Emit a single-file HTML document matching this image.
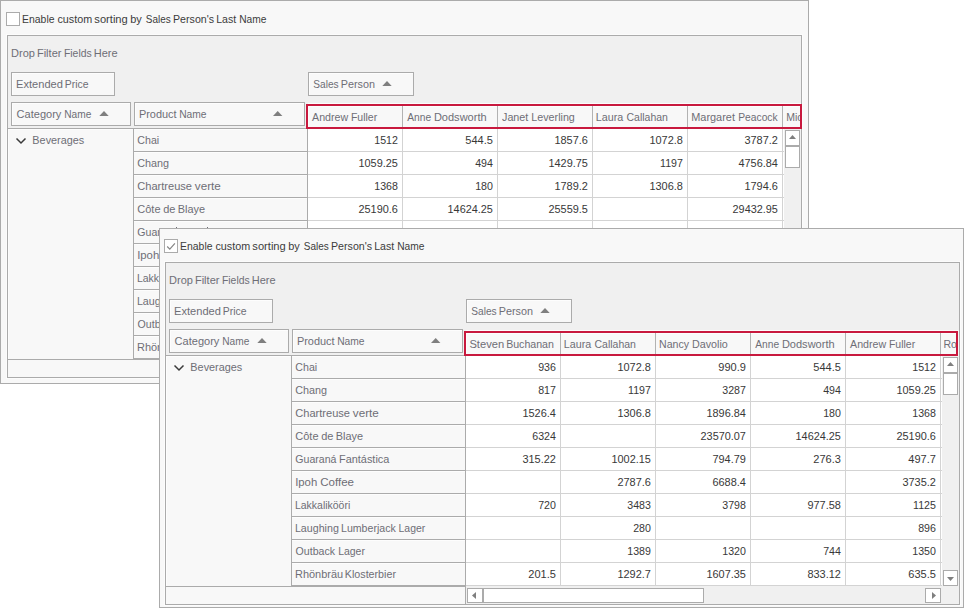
<!DOCTYPE html>
<html><head><meta charset="utf-8"><title>Pivot custom sorting</title>
<style>
html,body{margin:0;padding:0;background:#fff;}
body{width:964px;height:608px;position:relative;overflow:hidden;font-family:"Liberation Sans",sans-serif;font-size:11px;line-height:12px;}
div,svg{position:absolute;box-sizing:content-box;}
.t{white-space:nowrap;height:12px;}
</style></head><body>
<div style="left:0px;top:0px;width:807px;height:382px;border:1px solid #ababab;background:#f8f8f8;overflow:hidden">
<div style="left:-1px;top:-1px;width:0;height:0">
<div style="left:6px;top:12px;width:12px;height:12px;border:1px solid #ababab;background:#fff"></div>
<div class="t" style="left:22px;top:13px;color:#3c3c3c;transform:translateX(0.09px) scaleX(0.9459);transform-origin:0 0;">Enable</div>
<div class="t" style="left:57px;top:13px;color:#3c3c3c;transform:translateX(0.43px) scaleX(0.9789);transform-origin:0 0;">custom</div>
<div class="t" style="left:94px;top:13px;color:#3c3c3c;transform:translateX(0.34px) scaleX(1.0113);transform-origin:0 0;">sorting</div>
<div class="t" style="left:130px;top:13px;color:#3c3c3c;transform:translateX(0.26px) scaleX(0.9991);transform-origin:0 0;">by</div>
<div class="t" style="left:145px;top:13px;color:#3c3c3c;transform:translateX(0.75px) scaleX(0.906);transform-origin:0 0;">Sales</div>
<div class="t" style="left:173px;top:13px;color:#3c3c3c;transform:translateX(0.03px) scaleX(0.9659);transform-origin:0 0;">Person's</div>
<div class="t" style="left:216px;top:13px;color:#3c3c3c;transform:translateX(0.14px) scaleX(0.9596);transform-origin:0 0;">Last</div>
<div class="t" style="left:239px;top:13px;color:#3c3c3c;transform:translateX(0.16px) scaleX(0.9286);transform-origin:0 0;">Name</div>
<div style="left:7px;top:35px;width:793px;height:341px;border:1px solid #ababab;background:#f0f0f0;box-shadow:0 0 0 1px #fcfcfc"></div>
<div class="t" style="left:11px;top:47px;color:#6e6e76;transform:translateX(0.05px) scaleX(1.0);transform-origin:0 0;">Drop</div>
<div class="t" style="left:36px;top:47px;color:#6e6e76;transform:translateX(0.9px) scaleX(1.0043);transform-origin:0 0;">Filter</div>
<div class="t" style="left:63px;top:47px;color:#6e6e76;transform:translateX(0.95px) scaleX(0.9464);transform-origin:0 0;">Fields</div>
<div class="t" style="left:93px;top:47px;color:#6e6e76;transform:translateX(0.8px) scaleX(1.0);transform-origin:0 0;">Here</div>
<div style="left:11px;top:72px;width:102px;height:22px;border:1px solid #ababab;background:#f8f8f8;box-shadow:inset 1px 1px 0 #fdfdfd"></div>
<div class="t" style="left:16px;top:78px;color:#6e6e76;transform:translateX(0.04px) scaleX(1.0078);transform-origin:0 0;">Extended</div>
<div class="t" style="left:64px;top:78px;color:#6e6e76;transform:translateX(0.85px) scaleX(0.9494);transform-origin:0 0;">Price</div>
<div style="left:308px;top:72px;width:104px;height:22px;border:1px solid #ababab;background:#f8f8f8;box-shadow:inset 1px 1px 0 #fdfdfd"></div>
<div class="t" style="left:313px;top:78px;color:#6e6e76;transform:translateX(0.34px) scaleX(0.9211);transform-origin:0 0;">Sales</div>
<div class="t" style="left:340px;top:78px;color:#6e6e76;transform:translateX(0.72px) scaleX(0.9819);transform-origin:0 0;">Person</div>
<svg style="left:381px;top:80px" width="12" height="8" viewBox="0 0 12 8"><polygon points="1.3,6.1 10.7,6.1 6.0,1.1" fill="#7f7f7f"/></svg>
<div style="left:11px;top:102px;width:118px;height:22px;border:1px solid #ababab;background:#f8f8f8;box-shadow:inset 1px 1px 0 #fdfdfd"></div>
<div class="t" style="left:16px;top:108px;color:#6e6e76;transform:translateX(0.6px) scaleX(1.0023);transform-origin:0 0;">Category</div>
<div class="t" style="left:64px;top:108px;color:#6e6e76;transform:translateX(0.27px) scaleX(0.9232);transform-origin:0 0;">Name</div>
<svg style="left:98px;top:110px" width="12" height="8" viewBox="0 0 12 8"><polygon points="1.3,6.1 10.7,6.1 6,1.1" fill="#7f7f7f"/></svg>
<div style="left:134px;top:102px;width:169px;height:22px;border:1px solid #ababab;background:#f8f8f8;box-shadow:inset 1px 1px 0 #fdfdfd"></div>
<div class="t" style="left:138px;top:108px;color:#6e6e76;transform:translateX(0.9px) scaleX(0.9946);transform-origin:0 0;">Product</div>
<div class="t" style="left:179px;top:108px;color:#6e6e76;transform:translateX(0.16px) scaleX(0.9339);transform-origin:0 0;">Name</div>
<svg style="left:272px;top:110px" width="12" height="8" viewBox="0 0 12 8"><polygon points="1.0,6.1 10.4,6.1 5.7,1.1" fill="#7f7f7f"/></svg>
<div style="left:308px;top:103px;width:493px;height:26px;background:#f8f8f8;box-shadow:inset 0 1px 0 #fcfcfc;"></div>
<div style="left:308px;top:106px;width:492px;height:1px;background:#fdfdfd;"></div>
<div style="left:308px;top:106px;width:1px;height:21px;background:#fdfdfd;"></div>
<div class="t" style="left:312px;top:111px;color:#6e6e76;transform:translateX(0.1px) scaleX(0.9678);transform-origin:0 0;">Andrew</div>
<div class="t" style="left:350px;top:111px;color:#6e6e76;transform:translateX(0.94px) scaleX(0.9545);transform-origin:0 0;">Fuller</div>
<div style="left:402px;top:104px;width:1px;height:25px;background:#b2b2b2;"></div>
<div class="t" style="left:407px;top:111px;color:#6e6e76;transform:translateX(0.3px) scaleX(0.9286);transform-origin:0 0;">Anne</div>
<div class="t" style="left:433px;top:111px;color:#6e6e76;transform:translateX(0.9px) scaleX(1.002);transform-origin:0 0;">Dodsworth</div>
<div style="left:497px;top:104px;width:1px;height:25px;background:#b2b2b2;"></div>
<div class="t" style="left:502px;top:111px;color:#6e6e76;transform:translateX(0.0px) scaleX(0.9774);transform-origin:0 0;">Janet</div>
<div class="t" style="left:531px;top:111px;color:#6e6e76;transform:translateX(0.32px) scaleX(0.9744);transform-origin:0 0;">Leverling</div>
<div style="left:592px;top:104px;width:1px;height:25px;background:#b2b2b2;"></div>
<div class="t" style="left:595px;top:111px;color:#6e6e76;transform:translateX(0.82px) scaleX(0.9743);transform-origin:0 0;">Laura</div>
<div class="t" style="left:626px;top:111px;color:#6e6e76;transform:translateX(0.53px) scaleX(0.9525);transform-origin:0 0;">Callahan</div>
<div style="left:687px;top:104px;width:1px;height:25px;background:#b2b2b2;"></div>
<div class="t" style="left:691px;top:111px;color:#6e6e76;transform:translateX(0.21px) scaleX(0.993);transform-origin:0 0;">Margaret</div>
<div class="t" style="left:738px;top:111px;color:#6e6e76;transform:translateX(0.26px) scaleX(0.9322);transform-origin:0 0;">Peacock</div>
<div style="left:782px;top:104px;width:1px;height:25px;background:#b2b2b2;"></div>
<div style="left:783px;top:0;width:17px;height:380px;overflow:hidden"><div style="left:-783px;top:0;width:0;height:0">
<div class="t" style="left:786px;top:111px;color:#6e6e76;transform:translateX(0.24px) scaleX(0.955);transform-origin:0 0;">Michael</div>
</div></div>
<div style="left:8px;top:128px;width:300px;height:1px;background:#ababab;"></div>
<div style="left:8px;top:129px;width:125px;height:230px;background:#f8f8f8;box-shadow:inset 1px 1px 0 #fdfdfd;"></div>
<div style="left:8px;top:359px;width:300px;height:1px;background:#ababab;"></div>
<div style="left:133px;top:128px;width:1px;height:232px;background:#ababab;"></div>
<div style="left:134px;top:129px;width:173px;height:230px;background:#f8f8f8;"></div>
<div style="left:307px;top:129px;width:1px;height:248px;background:#ababab;"></div>
<div style="left:8px;top:360px;width:299px;height:17px;background:#f8f8f8;"></div>
<svg style="left:15px;top:137px" width="12" height="8" viewBox="0 0 12 8"><path d="M1.5 1.5 L6 6 L10.5 1.5" fill="none" stroke="#3a3a3a" stroke-width="1.5"/></svg>
<div class="t" style="left:32px;top:134px;color:#6e6e76;transform:translateX(0.37px) scaleX(0.9852);transform-origin:0 0;">Beverages</div>
<div style="left:308px;top:129px;width:476px;height:230px;background:#fff;"></div>
<div class="t" style="left:137px;top:134px;color:#6e6e76;transform:translateX(0.32px) scaleX(0.9671);transform-origin:0 0;">Chai</div>
<div style="left:134px;top:151px;width:173px;height:1px;background:#ababab;"></div>
<div style="left:134px;top:129px;width:173px;height:1px;background:#fdfdfd;"></div>
<div style="left:308px;top:151px;width:476px;height:1px;background:#d3d3d3;"></div>
<div class="t" style="left:277px;width:120px;text-align:right;top:134px;color:#383838;transform:translateX(0.9px) scaleX(0.9662);transform-origin:100% 0;">1512</div>
<div class="t" style="left:372px;width:120px;text-align:right;top:134px;color:#383838;transform:translateX(0.9px) scaleX(1.002);transform-origin:100% 0;">544.5</div>
<div class="t" style="left:467px;width:120px;text-align:right;top:134px;color:#383838;transform:translateX(0.9px) scaleX(0.9955);transform-origin:100% 0;">1857.6</div>
<div class="t" style="left:562px;width:120px;text-align:right;top:134px;color:#383838;transform:translateX(0.9px) scaleX(0.9955);transform-origin:100% 0;">1072.8</div>
<div class="t" style="left:657px;width:120px;text-align:right;top:134px;color:#383838;transform:translateX(0.9px) scaleX(0.9955);transform-origin:100% 0;">3787.2</div>
<div class="t" style="left:137px;top:157px;color:#6e6e76;transform:translateX(0.31px) scaleX(0.9807);transform-origin:0 0;">Chang</div>
<div style="left:134px;top:174px;width:173px;height:1px;background:#ababab;"></div>
<div style="left:134px;top:152px;width:173px;height:1px;background:#fdfdfd;"></div>
<div style="left:308px;top:174px;width:476px;height:1px;background:#d3d3d3;"></div>
<div class="t" style="left:277px;width:120px;text-align:right;top:157px;color:#383838;transform:translateX(0.9px) scaleX(0.991);transform-origin:100% 0;">1059.25</div>
<div class="t" style="left:372px;width:120px;text-align:right;top:157px;color:#383838;transform:translateX(0.9px) scaleX(0.9662);transform-origin:100% 0;">494</div>
<div class="t" style="left:467px;width:120px;text-align:right;top:157px;color:#383838;transform:translateX(0.9px) scaleX(0.991);transform-origin:100% 0;">1429.75</div>
<div class="t" style="left:562px;width:120px;text-align:right;top:157px;color:#383838;transform:translateX(0.9px) scaleX(0.9662);transform-origin:100% 0;">1197</div>
<div class="t" style="left:657px;width:120px;text-align:right;top:157px;color:#383838;transform:translateX(0.9px) scaleX(0.991);transform-origin:100% 0;">4756.84</div>
<div class="t" style="left:137px;top:180px;color:#6e6e76;transform:translateX(0.3px) scaleX(1.0056);transform-origin:0 0;">Chartreuse</div>
<div class="t" style="left:194px;top:180px;color:#6e6e76;transform:translateX(0.84px) scaleX(1.0607);transform-origin:0 0;">verte</div>
<div style="left:134px;top:197px;width:173px;height:1px;background:#ababab;"></div>
<div style="left:134px;top:175px;width:173px;height:1px;background:#fdfdfd;"></div>
<div style="left:308px;top:197px;width:476px;height:1px;background:#d3d3d3;"></div>
<div class="t" style="left:277px;width:120px;text-align:right;top:180px;color:#383838;transform:translateX(0.9px) scaleX(0.9662);transform-origin:100% 0;">1368</div>
<div class="t" style="left:372px;width:120px;text-align:right;top:180px;color:#383838;transform:translateX(0.9px) scaleX(0.9662);transform-origin:100% 0;">180</div>
<div class="t" style="left:467px;width:120px;text-align:right;top:180px;color:#383838;transform:translateX(0.9px) scaleX(0.9955);transform-origin:100% 0;">1789.2</div>
<div class="t" style="left:562px;width:120px;text-align:right;top:180px;color:#383838;transform:translateX(0.9px) scaleX(0.9955);transform-origin:100% 0;">1306.8</div>
<div class="t" style="left:657px;width:120px;text-align:right;top:180px;color:#383838;transform:translateX(0.9px) scaleX(0.9955);transform-origin:100% 0;">1794.6</div>
<div class="t" style="left:137px;top:203px;color:#6e6e76;transform:translateX(0.3px) scaleX(1.0);transform-origin:0 0;">Côte</div>
<div class="t" style="left:163px;top:203px;color:#6e6e76;transform:translateX(0.2px) scaleX(1.0);transform-origin:0 0;">de</div>
<div class="t" style="left:177px;top:203px;color:#6e6e76;transform:translateX(0.71px) scaleX(0.9923);transform-origin:0 0;">Blaye</div>
<div style="left:134px;top:220px;width:173px;height:1px;background:#ababab;"></div>
<div style="left:134px;top:198px;width:173px;height:1px;background:#fdfdfd;"></div>
<div style="left:308px;top:220px;width:476px;height:1px;background:#d3d3d3;"></div>
<div class="t" style="left:277px;width:120px;text-align:right;top:203px;color:#383838;transform:translateX(0.9px) scaleX(0.991);transform-origin:100% 0;">25190.6</div>
<div class="t" style="left:372px;width:120px;text-align:right;top:203px;color:#383838;transform:translateX(0.9px) scaleX(0.9877);transform-origin:100% 0;">14624.25</div>
<div class="t" style="left:467px;width:120px;text-align:right;top:203px;color:#383838;transform:translateX(0.9px) scaleX(0.991);transform-origin:100% 0;">25559.5</div>
<div class="t" style="left:657px;width:120px;text-align:right;top:203px;color:#383838;transform:translateX(0.9px) scaleX(0.9877);transform-origin:100% 0;">29432.95</div>
<div class="t" style="left:137px;top:226px;color:#6e6e76;transform:translateX(0.32px) scaleX(0.9597);transform-origin:0 0;">Guaraná</div>
<div class="t" style="left:181px;top:226px;color:#6e6e76;transform:translateX(0.01px) scaleX(0.992);transform-origin:0 0;">Fantástica</div>
<div style="left:134px;top:243px;width:173px;height:1px;background:#ababab;"></div>
<div style="left:134px;top:221px;width:173px;height:1px;background:#fdfdfd;"></div>
<div style="left:308px;top:243px;width:476px;height:1px;background:#d3d3d3;"></div>
<div class="t" style="left:277px;width:120px;text-align:right;top:226px;color:#383838;transform:translateX(0.9px) scaleX(1.002);transform-origin:100% 0;">497.7</div>
<div class="t" style="left:372px;width:120px;text-align:right;top:226px;color:#383838;transform:translateX(0.9px) scaleX(1.002);transform-origin:100% 0;">276.3</div>
<div class="t" style="left:562px;width:120px;text-align:right;top:226px;color:#383838;transform:translateX(0.9px) scaleX(0.991);transform-origin:100% 0;">1002.15</div>
<div class="t" style="left:137px;top:249px;color:#6e6e76;transform:translateX(0.17px) scaleX(1.0305);transform-origin:0 0;">Ipoh</div>
<div class="t" style="left:162px;top:249px;color:#6e6e76;transform:translateX(0.17px) scaleX(1.0498);transform-origin:0 0;">Coffee</div>
<div style="left:134px;top:266px;width:173px;height:1px;background:#ababab;"></div>
<div style="left:134px;top:244px;width:173px;height:1px;background:#fdfdfd;"></div>
<div style="left:308px;top:266px;width:476px;height:1px;background:#d3d3d3;"></div>
<div class="t" style="left:136px;top:272px;color:#6e6e76;transform:translateX(0.94px) scaleX(0.9522);transform-origin:0 0;">Lakkalikööri</div>
<div style="left:134px;top:289px;width:173px;height:1px;background:#ababab;"></div>
<div style="left:134px;top:267px;width:173px;height:1px;background:#fdfdfd;"></div>
<div style="left:308px;top:289px;width:476px;height:1px;background:#d3d3d3;"></div>
<div class="t" style="left:136px;top:295px;color:#6e6e76;transform:translateX(0.93px) scaleX(0.9703);transform-origin:0 0;">Laughing</div>
<div class="t" style="left:183px;top:295px;color:#6e6e76;transform:translateX(0.03px) scaleX(0.9624);transform-origin:0 0;">Lumberjack</div>
<div class="t" style="left:240px;top:295px;color:#6e6e76;transform:translateX(0.55px) scaleX(0.9483);transform-origin:0 0;">Lager</div>
<div style="left:134px;top:312px;width:173px;height:1px;background:#ababab;"></div>
<div style="left:134px;top:290px;width:173px;height:1px;background:#fdfdfd;"></div>
<div style="left:308px;top:312px;width:476px;height:1px;background:#d3d3d3;"></div>
<div class="t" style="left:137px;top:318px;color:#6e6e76;transform:translateX(0.62px) scaleX(0.9605);transform-origin:0 0;">Outback</div>
<div class="t" style="left:180px;top:318px;color:#6e6e76;transform:translateX(0.14px) scaleX(0.952);transform-origin:0 0;">Lager</div>
<div style="left:134px;top:335px;width:173px;height:1px;background:#ababab;"></div>
<div style="left:134px;top:313px;width:173px;height:1px;background:#fdfdfd;"></div>
<div style="left:308px;top:335px;width:476px;height:1px;background:#d3d3d3;"></div>
<div class="t" style="left:137px;top:341px;color:#6e6e76;transform:translateX(0.0px) scaleX(0.9957);transform-origin:0 0;">Rhönbräu</div>
<div class="t" style="left:186px;top:341px;color:#6e6e76;transform:translateX(0.82px) scaleX(0.9728);transform-origin:0 0;">Klosterbier</div>
<div style="left:134px;top:358px;width:173px;height:1px;background:#ababab;"></div>
<div style="left:134px;top:336px;width:173px;height:1px;background:#fdfdfd;"></div>
<div style="left:308px;top:358px;width:476px;height:1px;background:#d3d3d3;"></div>
<div style="left:402px;top:129px;width:1px;height:230px;background:#d3d3d3;"></div>
<div style="left:497px;top:129px;width:1px;height:230px;background:#d3d3d3;"></div>
<div style="left:592px;top:129px;width:1px;height:230px;background:#d3d3d3;"></div>
<div style="left:687px;top:129px;width:1px;height:230px;background:#d3d3d3;"></div>
<div style="left:782px;top:129px;width:1px;height:230px;background:#d3d3d3;"></div>
<div style="left:176px;top:227px;width:1px;height:1px;background:#6e6e76;"></div>
<div style="left:207px;top:227px;width:1px;height:1px;background:#6e6e76;"></div>
<div style="left:784px;top:129px;width:17px;height:231px;background:#f0f0f0;"></div>
<div style="left:785px;top:130px;width:13px;height:14px;border:1px solid #ababab;background:#fff"></div>
<svg style="left:788px;top:134px" width="9" height="6" viewBox="0 0 9 6"><polygon points="1.0,5 8.0,5 4.5,1" fill="#7f7f7f"/></svg>
<div style="left:785px;top:146px;width:13px;height:20px;border:1px solid #ababab;background:#fff"></div>
<div style="left:785px;top:343px;width:13px;height:14px;border:1px solid #ababab;background:#fff"></div>
<svg style="left:788px;top:349px" width="9" height="6" viewBox="0 0 9 6"><polygon points="1.0,1 8.0,1 4.5,5" fill="#7f7f7f"/></svg>
<div style="left:308px;top:360px;width:493px;height:17px;background:#f0f0f0;"></div>
<div style="left:309px;top:361px;width:14px;height:13px;border:1px solid #ababab;background:#fff"></div>
<svg style="left:313px;top:364px" width="6" height="9" viewBox="0 0 6 9"><polygon points="5,1.0 5,8.0 1,4.5" fill="#7f7f7f"/></svg>
<div style="left:325px;top:361px;width:219px;height:13px;border:1px solid #ababab;background:#fff"></div>
<div style="left:767px;top:361px;width:14px;height:13px;border:1px solid #ababab;background:#fff"></div>
<svg style="left:773px;top:364px" width="6" height="9" viewBox="0 0 6 9"><polygon points="1,1.0 1,8.0 5,4.5" fill="#7f7f7f"/></svg>
<div style="left:306px;top:104px;width:492px;height:21px;border:2px solid #c8193e"></div>
</div></div>
<div style="left:159px;top:228px;width:803px;height:378px;border:1px solid #ababab;background:#f8f8f8;overflow:hidden">
<div style="left:-2px;top:-2px;width:0;height:0">
<div style="left:6px;top:12px;width:12px;height:12px;border:1px solid #ababab;background:#fff"></div>
<svg style="left:6px;top:12px" width="14" height="14" viewBox="0 0 14 14"><path d="M3.2 7.5 L5.8 10.1 L10.9 4.3" fill="none" stroke="#858585" stroke-width="1.2"/></svg>
<div class="t" style="left:22px;top:13px;color:#3c3c3c;transform:translateX(0.09px) scaleX(0.9459);transform-origin:0 0;">Enable</div>
<div class="t" style="left:57px;top:13px;color:#3c3c3c;transform:translateX(0.43px) scaleX(0.9789);transform-origin:0 0;">custom</div>
<div class="t" style="left:94px;top:13px;color:#3c3c3c;transform:translateX(0.34px) scaleX(1.0113);transform-origin:0 0;">sorting</div>
<div class="t" style="left:130px;top:13px;color:#3c3c3c;transform:translateX(0.26px) scaleX(0.9991);transform-origin:0 0;">by</div>
<div class="t" style="left:145px;top:13px;color:#3c3c3c;transform:translateX(0.75px) scaleX(0.906);transform-origin:0 0;">Sales</div>
<div class="t" style="left:173px;top:13px;color:#3c3c3c;transform:translateX(0.03px) scaleX(0.9659);transform-origin:0 0;">Person's</div>
<div class="t" style="left:216px;top:13px;color:#3c3c3c;transform:translateX(0.14px) scaleX(0.9596);transform-origin:0 0;">Last</div>
<div class="t" style="left:239px;top:13px;color:#3c3c3c;transform:translateX(0.16px) scaleX(0.9286);transform-origin:0 0;">Name</div>
<div style="left:7px;top:35px;width:793px;height:341px;border:1px solid #ababab;background:#f0f0f0;box-shadow:0 0 0 1px #fcfcfc"></div>
<div class="t" style="left:11px;top:47px;color:#6e6e76;transform:translateX(0.05px) scaleX(1.0);transform-origin:0 0;">Drop</div>
<div class="t" style="left:36px;top:47px;color:#6e6e76;transform:translateX(0.9px) scaleX(1.0043);transform-origin:0 0;">Filter</div>
<div class="t" style="left:63px;top:47px;color:#6e6e76;transform:translateX(0.95px) scaleX(0.9464);transform-origin:0 0;">Fields</div>
<div class="t" style="left:93px;top:47px;color:#6e6e76;transform:translateX(0.8px) scaleX(1.0);transform-origin:0 0;">Here</div>
<div style="left:11px;top:72px;width:102px;height:22px;border:1px solid #ababab;background:#f8f8f8;box-shadow:inset 1px 1px 0 #fdfdfd"></div>
<div class="t" style="left:16px;top:78px;color:#6e6e76;transform:translateX(0.04px) scaleX(1.0078);transform-origin:0 0;">Extended</div>
<div class="t" style="left:64px;top:78px;color:#6e6e76;transform:translateX(0.85px) scaleX(0.9494);transform-origin:0 0;">Price</div>
<div style="left:308px;top:72px;width:104px;height:22px;border:1px solid #ababab;background:#f8f8f8;box-shadow:inset 1px 1px 0 #fdfdfd"></div>
<div class="t" style="left:313px;top:78px;color:#6e6e76;transform:translateX(0.34px) scaleX(0.9211);transform-origin:0 0;">Sales</div>
<div class="t" style="left:340px;top:78px;color:#6e6e76;transform:translateX(0.72px) scaleX(0.9819);transform-origin:0 0;">Person</div>
<svg style="left:381px;top:80px" width="12" height="8" viewBox="0 0 12 8"><polygon points="1.3,6.1 10.7,6.1 6.0,1.1" fill="#7f7f7f"/></svg>
<div style="left:11px;top:102px;width:118px;height:22px;border:1px solid #ababab;background:#f8f8f8;box-shadow:inset 1px 1px 0 #fdfdfd"></div>
<div class="t" style="left:16px;top:108px;color:#6e6e76;transform:translateX(0.6px) scaleX(1.0023);transform-origin:0 0;">Category</div>
<div class="t" style="left:64px;top:108px;color:#6e6e76;transform:translateX(0.27px) scaleX(0.9232);transform-origin:0 0;">Name</div>
<svg style="left:98px;top:110px" width="12" height="8" viewBox="0 0 12 8"><polygon points="1.3,6.1 10.7,6.1 6,1.1" fill="#7f7f7f"/></svg>
<div style="left:134px;top:102px;width:169px;height:22px;border:1px solid #ababab;background:#f8f8f8;box-shadow:inset 1px 1px 0 #fdfdfd"></div>
<div class="t" style="left:138px;top:108px;color:#6e6e76;transform:translateX(0.9px) scaleX(0.9946);transform-origin:0 0;">Product</div>
<div class="t" style="left:179px;top:108px;color:#6e6e76;transform:translateX(0.16px) scaleX(0.9339);transform-origin:0 0;">Name</div>
<svg style="left:272px;top:110px" width="12" height="8" viewBox="0 0 12 8"><polygon points="1.0,6.1 10.4,6.1 5.7,1.1" fill="#7f7f7f"/></svg>
<div style="left:308px;top:103px;width:493px;height:26px;background:#f8f8f8;box-shadow:inset 0 1px 0 #fcfcfc;"></div>
<div style="left:308px;top:106px;width:490px;height:1px;background:#fdfdfd;"></div>
<div style="left:308px;top:106px;width:1px;height:21px;background:#fdfdfd;"></div>
<div class="t" style="left:311px;top:111px;color:#6e6e76;transform:translateX(0.39px) scaleX(1.0152);transform-origin:0 0;">Steven</div>
<div class="t" style="left:348px;top:111px;color:#6e6e76;transform:translateX(0.13px) scaleX(0.9645);transform-origin:0 0;">Buchanan</div>
<div style="left:402px;top:104px;width:1px;height:25px;background:#b2b2b2;"></div>
<div class="t" style="left:405px;top:111px;color:#6e6e76;transform:translateX(0.82px) scaleX(0.9743);transform-origin:0 0;">Laura</div>
<div class="t" style="left:436px;top:111px;color:#6e6e76;transform:translateX(0.53px) scaleX(0.9525);transform-origin:0 0;">Callahan</div>
<div style="left:497px;top:104px;width:1px;height:25px;background:#b2b2b2;"></div>
<div class="t" style="left:501px;top:111px;color:#6e6e76;transform:translateX(0.03px) scaleX(0.9619);transform-origin:0 0;">Nancy</div>
<div class="t" style="left:533px;top:111px;color:#6e6e76;transform:translateX(0.92px) scaleX(0.9773);transform-origin:0 0;">Davolio</div>
<div style="left:592px;top:104px;width:1px;height:25px;background:#b2b2b2;"></div>
<div class="t" style="left:597px;top:111px;color:#6e6e76;transform:translateX(0.3px) scaleX(0.9286);transform-origin:0 0;">Anne</div>
<div class="t" style="left:623px;top:111px;color:#6e6e76;transform:translateX(0.9px) scaleX(1.002);transform-origin:0 0;">Dodsworth</div>
<div style="left:687px;top:104px;width:1px;height:25px;background:#b2b2b2;"></div>
<div class="t" style="left:692px;top:111px;color:#6e6e76;transform:translateX(0.1px) scaleX(0.9678);transform-origin:0 0;">Andrew</div>
<div class="t" style="left:730px;top:111px;color:#6e6e76;transform:translateX(0.94px) scaleX(0.9545);transform-origin:0 0;">Fuller</div>
<div style="left:782px;top:104px;width:1px;height:25px;background:#b2b2b2;"></div>
<div style="left:783px;top:0;width:15px;height:380px;overflow:hidden"><div style="left:-783px;top:0;width:0;height:0">
<div class="t" style="left:785px;top:111px;color:#6e6e76;transform:translateX(0.44px) scaleX(0.955);transform-origin:0 0;">Robert</div>
</div></div>
<div style="left:8px;top:128px;width:300px;height:1px;background:#ababab;"></div>
<div style="left:8px;top:129px;width:125px;height:230px;background:#f8f8f8;box-shadow:inset 1px 1px 0 #fdfdfd;"></div>
<div style="left:8px;top:359px;width:300px;height:1px;background:#ababab;"></div>
<div style="left:133px;top:128px;width:1px;height:232px;background:#ababab;"></div>
<div style="left:134px;top:129px;width:173px;height:230px;background:#f8f8f8;"></div>
<div style="left:307px;top:129px;width:1px;height:248px;background:#ababab;"></div>
<div style="left:8px;top:360px;width:299px;height:17px;background:#f8f8f8;"></div>
<svg style="left:15px;top:137px" width="12" height="8" viewBox="0 0 12 8"><path d="M1.5 1.5 L6 6 L10.5 1.5" fill="none" stroke="#3a3a3a" stroke-width="1.5"/></svg>
<div class="t" style="left:32px;top:134px;color:#6e6e76;transform:translateX(0.37px) scaleX(0.9852);transform-origin:0 0;">Beverages</div>
<div style="left:308px;top:129px;width:476px;height:230px;background:#fff;"></div>
<div class="t" style="left:137px;top:134px;color:#6e6e76;transform:translateX(0.32px) scaleX(0.9671);transform-origin:0 0;">Chai</div>
<div style="left:134px;top:151px;width:173px;height:1px;background:#ababab;"></div>
<div style="left:134px;top:129px;width:173px;height:1px;background:#fdfdfd;"></div>
<div style="left:308px;top:151px;width:476px;height:1px;background:#d3d3d3;"></div>
<div class="t" style="left:277px;width:120px;text-align:right;top:134px;color:#383838;transform:translateX(0.9px) scaleX(0.9662);transform-origin:100% 0;">936</div>
<div class="t" style="left:372px;width:120px;text-align:right;top:134px;color:#383838;transform:translateX(0.9px) scaleX(0.9955);transform-origin:100% 0;">1072.8</div>
<div class="t" style="left:467px;width:120px;text-align:right;top:134px;color:#383838;transform:translateX(0.9px) scaleX(1.002);transform-origin:100% 0;">990.9</div>
<div class="t" style="left:562px;width:120px;text-align:right;top:134px;color:#383838;transform:translateX(0.9px) scaleX(1.002);transform-origin:100% 0;">544.5</div>
<div class="t" style="left:657px;width:120px;text-align:right;top:134px;color:#383838;transform:translateX(0.9px) scaleX(0.9662);transform-origin:100% 0;">1512</div>
<div class="t" style="left:137px;top:157px;color:#6e6e76;transform:translateX(0.31px) scaleX(0.9807);transform-origin:0 0;">Chang</div>
<div style="left:134px;top:174px;width:173px;height:1px;background:#ababab;"></div>
<div style="left:134px;top:152px;width:173px;height:1px;background:#fdfdfd;"></div>
<div style="left:308px;top:174px;width:476px;height:1px;background:#d3d3d3;"></div>
<div class="t" style="left:277px;width:120px;text-align:right;top:157px;color:#383838;transform:translateX(0.9px) scaleX(0.9662);transform-origin:100% 0;">817</div>
<div class="t" style="left:372px;width:120px;text-align:right;top:157px;color:#383838;transform:translateX(0.9px) scaleX(0.9662);transform-origin:100% 0;">1197</div>
<div class="t" style="left:467px;width:120px;text-align:right;top:157px;color:#383838;transform:translateX(0.9px) scaleX(0.9662);transform-origin:100% 0;">3287</div>
<div class="t" style="left:562px;width:120px;text-align:right;top:157px;color:#383838;transform:translateX(0.9px) scaleX(0.9662);transform-origin:100% 0;">494</div>
<div class="t" style="left:657px;width:120px;text-align:right;top:157px;color:#383838;transform:translateX(0.9px) scaleX(0.991);transform-origin:100% 0;">1059.25</div>
<div class="t" style="left:137px;top:180px;color:#6e6e76;transform:translateX(0.3px) scaleX(1.0056);transform-origin:0 0;">Chartreuse</div>
<div class="t" style="left:194px;top:180px;color:#6e6e76;transform:translateX(0.84px) scaleX(1.0607);transform-origin:0 0;">verte</div>
<div style="left:134px;top:197px;width:173px;height:1px;background:#ababab;"></div>
<div style="left:134px;top:175px;width:173px;height:1px;background:#fdfdfd;"></div>
<div style="left:308px;top:197px;width:476px;height:1px;background:#d3d3d3;"></div>
<div class="t" style="left:277px;width:120px;text-align:right;top:180px;color:#383838;transform:translateX(0.9px) scaleX(0.9955);transform-origin:100% 0;">1526.4</div>
<div class="t" style="left:372px;width:120px;text-align:right;top:180px;color:#383838;transform:translateX(0.9px) scaleX(0.9955);transform-origin:100% 0;">1306.8</div>
<div class="t" style="left:467px;width:120px;text-align:right;top:180px;color:#383838;transform:translateX(0.9px) scaleX(0.991);transform-origin:100% 0;">1896.84</div>
<div class="t" style="left:562px;width:120px;text-align:right;top:180px;color:#383838;transform:translateX(0.9px) scaleX(0.9662);transform-origin:100% 0;">180</div>
<div class="t" style="left:657px;width:120px;text-align:right;top:180px;color:#383838;transform:translateX(0.9px) scaleX(0.9662);transform-origin:100% 0;">1368</div>
<div class="t" style="left:137px;top:203px;color:#6e6e76;transform:translateX(0.3px) scaleX(1.0);transform-origin:0 0;">Côte</div>
<div class="t" style="left:163px;top:203px;color:#6e6e76;transform:translateX(0.2px) scaleX(1.0);transform-origin:0 0;">de</div>
<div class="t" style="left:177px;top:203px;color:#6e6e76;transform:translateX(0.71px) scaleX(0.9923);transform-origin:0 0;">Blaye</div>
<div style="left:134px;top:220px;width:173px;height:1px;background:#ababab;"></div>
<div style="left:134px;top:198px;width:173px;height:1px;background:#fdfdfd;"></div>
<div style="left:308px;top:220px;width:476px;height:1px;background:#d3d3d3;"></div>
<div class="t" style="left:277px;width:120px;text-align:right;top:203px;color:#383838;transform:translateX(0.9px) scaleX(0.9662);transform-origin:100% 0;">6324</div>
<div class="t" style="left:467px;width:120px;text-align:right;top:203px;color:#383838;transform:translateX(0.9px) scaleX(0.9877);transform-origin:100% 0;">23570.07</div>
<div class="t" style="left:562px;width:120px;text-align:right;top:203px;color:#383838;transform:translateX(0.9px) scaleX(0.9877);transform-origin:100% 0;">14624.25</div>
<div class="t" style="left:657px;width:120px;text-align:right;top:203px;color:#383838;transform:translateX(0.9px) scaleX(0.991);transform-origin:100% 0;">25190.6</div>
<div class="t" style="left:137px;top:226px;color:#6e6e76;transform:translateX(0.32px) scaleX(0.9597);transform-origin:0 0;">Guaraná</div>
<div class="t" style="left:181px;top:226px;color:#6e6e76;transform:translateX(0.01px) scaleX(0.992);transform-origin:0 0;">Fantástica</div>
<div style="left:134px;top:243px;width:173px;height:1px;background:#ababab;"></div>
<div style="left:134px;top:221px;width:173px;height:1px;background:#fdfdfd;"></div>
<div style="left:308px;top:243px;width:476px;height:1px;background:#d3d3d3;"></div>
<div class="t" style="left:277px;width:120px;text-align:right;top:226px;color:#383838;transform:translateX(0.9px) scaleX(0.9955);transform-origin:100% 0;">315.22</div>
<div class="t" style="left:372px;width:120px;text-align:right;top:226px;color:#383838;transform:translateX(0.9px) scaleX(0.991);transform-origin:100% 0;">1002.15</div>
<div class="t" style="left:467px;width:120px;text-align:right;top:226px;color:#383838;transform:translateX(0.9px) scaleX(0.9955);transform-origin:100% 0;">794.79</div>
<div class="t" style="left:562px;width:120px;text-align:right;top:226px;color:#383838;transform:translateX(0.9px) scaleX(1.002);transform-origin:100% 0;">276.3</div>
<div class="t" style="left:657px;width:120px;text-align:right;top:226px;color:#383838;transform:translateX(0.9px) scaleX(1.002);transform-origin:100% 0;">497.7</div>
<div class="t" style="left:137px;top:249px;color:#6e6e76;transform:translateX(0.17px) scaleX(1.0305);transform-origin:0 0;">Ipoh</div>
<div class="t" style="left:162px;top:249px;color:#6e6e76;transform:translateX(0.17px) scaleX(1.0498);transform-origin:0 0;">Coffee</div>
<div style="left:134px;top:266px;width:173px;height:1px;background:#ababab;"></div>
<div style="left:134px;top:244px;width:173px;height:1px;background:#fdfdfd;"></div>
<div style="left:308px;top:266px;width:476px;height:1px;background:#d3d3d3;"></div>
<div class="t" style="left:372px;width:120px;text-align:right;top:249px;color:#383838;transform:translateX(0.9px) scaleX(0.9955);transform-origin:100% 0;">2787.6</div>
<div class="t" style="left:467px;width:120px;text-align:right;top:249px;color:#383838;transform:translateX(0.9px) scaleX(0.9955);transform-origin:100% 0;">6688.4</div>
<div class="t" style="left:657px;width:120px;text-align:right;top:249px;color:#383838;transform:translateX(0.9px) scaleX(0.9955);transform-origin:100% 0;">3735.2</div>
<div class="t" style="left:136px;top:272px;color:#6e6e76;transform:translateX(0.94px) scaleX(0.9522);transform-origin:0 0;">Lakkalikööri</div>
<div style="left:134px;top:289px;width:173px;height:1px;background:#ababab;"></div>
<div style="left:134px;top:267px;width:173px;height:1px;background:#fdfdfd;"></div>
<div style="left:308px;top:289px;width:476px;height:1px;background:#d3d3d3;"></div>
<div class="t" style="left:277px;width:120px;text-align:right;top:272px;color:#383838;transform:translateX(0.9px) scaleX(0.9662);transform-origin:100% 0;">720</div>
<div class="t" style="left:372px;width:120px;text-align:right;top:272px;color:#383838;transform:translateX(0.9px) scaleX(0.9662);transform-origin:100% 0;">3483</div>
<div class="t" style="left:467px;width:120px;text-align:right;top:272px;color:#383838;transform:translateX(0.9px) scaleX(0.9662);transform-origin:100% 0;">3798</div>
<div class="t" style="left:562px;width:120px;text-align:right;top:272px;color:#383838;transform:translateX(0.9px) scaleX(0.9955);transform-origin:100% 0;">977.58</div>
<div class="t" style="left:657px;width:120px;text-align:right;top:272px;color:#383838;transform:translateX(0.9px) scaleX(0.9662);transform-origin:100% 0;">1125</div>
<div class="t" style="left:136px;top:295px;color:#6e6e76;transform:translateX(0.93px) scaleX(0.9703);transform-origin:0 0;">Laughing</div>
<div class="t" style="left:183px;top:295px;color:#6e6e76;transform:translateX(0.03px) scaleX(0.9624);transform-origin:0 0;">Lumberjack</div>
<div class="t" style="left:240px;top:295px;color:#6e6e76;transform:translateX(0.55px) scaleX(0.9483);transform-origin:0 0;">Lager</div>
<div style="left:134px;top:312px;width:173px;height:1px;background:#ababab;"></div>
<div style="left:134px;top:290px;width:173px;height:1px;background:#fdfdfd;"></div>
<div style="left:308px;top:312px;width:476px;height:1px;background:#d3d3d3;"></div>
<div class="t" style="left:372px;width:120px;text-align:right;top:295px;color:#383838;transform:translateX(0.9px) scaleX(0.9662);transform-origin:100% 0;">280</div>
<div class="t" style="left:657px;width:120px;text-align:right;top:295px;color:#383838;transform:translateX(0.9px) scaleX(0.9662);transform-origin:100% 0;">896</div>
<div class="t" style="left:137px;top:318px;color:#6e6e76;transform:translateX(0.62px) scaleX(0.9605);transform-origin:0 0;">Outback</div>
<div class="t" style="left:180px;top:318px;color:#6e6e76;transform:translateX(0.14px) scaleX(0.952);transform-origin:0 0;">Lager</div>
<div style="left:134px;top:335px;width:173px;height:1px;background:#ababab;"></div>
<div style="left:134px;top:313px;width:173px;height:1px;background:#fdfdfd;"></div>
<div style="left:308px;top:335px;width:476px;height:1px;background:#d3d3d3;"></div>
<div class="t" style="left:372px;width:120px;text-align:right;top:318px;color:#383838;transform:translateX(0.9px) scaleX(0.9662);transform-origin:100% 0;">1389</div>
<div class="t" style="left:467px;width:120px;text-align:right;top:318px;color:#383838;transform:translateX(0.9px) scaleX(0.9662);transform-origin:100% 0;">1320</div>
<div class="t" style="left:562px;width:120px;text-align:right;top:318px;color:#383838;transform:translateX(0.9px) scaleX(0.9662);transform-origin:100% 0;">744</div>
<div class="t" style="left:657px;width:120px;text-align:right;top:318px;color:#383838;transform:translateX(0.9px) scaleX(0.9662);transform-origin:100% 0;">1350</div>
<div class="t" style="left:137px;top:341px;color:#6e6e76;transform:translateX(0.0px) scaleX(0.9957);transform-origin:0 0;">Rhönbräu</div>
<div class="t" style="left:186px;top:341px;color:#6e6e76;transform:translateX(0.82px) scaleX(0.9728);transform-origin:0 0;">Klosterbier</div>
<div style="left:134px;top:358px;width:173px;height:1px;background:#ababab;"></div>
<div style="left:134px;top:336px;width:173px;height:1px;background:#fdfdfd;"></div>
<div style="left:308px;top:358px;width:476px;height:1px;background:#d3d3d3;"></div>
<div class="t" style="left:277px;width:120px;text-align:right;top:341px;color:#383838;transform:translateX(0.9px) scaleX(1.002);transform-origin:100% 0;">201.5</div>
<div class="t" style="left:372px;width:120px;text-align:right;top:341px;color:#383838;transform:translateX(0.9px) scaleX(0.9955);transform-origin:100% 0;">1292.7</div>
<div class="t" style="left:467px;width:120px;text-align:right;top:341px;color:#383838;transform:translateX(0.9px) scaleX(0.991);transform-origin:100% 0;">1607.35</div>
<div class="t" style="left:562px;width:120px;text-align:right;top:341px;color:#383838;transform:translateX(0.9px) scaleX(0.9955);transform-origin:100% 0;">833.12</div>
<div class="t" style="left:657px;width:120px;text-align:right;top:341px;color:#383838;transform:translateX(0.9px) scaleX(1.002);transform-origin:100% 0;">635.5</div>
<div style="left:402px;top:129px;width:1px;height:230px;background:#d3d3d3;"></div>
<div style="left:497px;top:129px;width:1px;height:230px;background:#d3d3d3;"></div>
<div style="left:592px;top:129px;width:1px;height:230px;background:#d3d3d3;"></div>
<div style="left:687px;top:129px;width:1px;height:230px;background:#d3d3d3;"></div>
<div style="left:782px;top:129px;width:1px;height:230px;background:#d3d3d3;"></div>
<div style="left:784px;top:129px;width:17px;height:231px;background:#f0f0f0;"></div>
<div style="left:785px;top:130px;width:13px;height:14px;border:1px solid #ababab;background:#fff"></div>
<svg style="left:788px;top:134px" width="9" height="6" viewBox="0 0 9 6"><polygon points="1.0,5 8.0,5 4.5,1" fill="#7f7f7f"/></svg>
<div style="left:785px;top:146px;width:13px;height:20px;border:1px solid #ababab;background:#fff"></div>
<div style="left:785px;top:343px;width:13px;height:14px;border:1px solid #ababab;background:#fff"></div>
<svg style="left:788px;top:349px" width="9" height="6" viewBox="0 0 9 6"><polygon points="1.0,1 8.0,1 4.5,5" fill="#7f7f7f"/></svg>
<div style="left:308px;top:360px;width:493px;height:17px;background:#f0f0f0;"></div>
<div style="left:309px;top:361px;width:14px;height:13px;border:1px solid #ababab;background:#fff"></div>
<svg style="left:313px;top:364px" width="6" height="9" viewBox="0 0 6 9"><polygon points="5,1.0 5,8.0 1,4.5" fill="#7f7f7f"/></svg>
<div style="left:325px;top:361px;width:219px;height:13px;border:1px solid #ababab;background:#fff"></div>
<div style="left:767px;top:361px;width:14px;height:13px;border:1px solid #ababab;background:#fff"></div>
<svg style="left:773px;top:364px" width="6" height="9" viewBox="0 0 6 9"><polygon points="1,1.0 1,8.0 5,4.5" fill="#7f7f7f"/></svg>
<div style="left:306px;top:104px;width:490px;height:21px;border:2px solid #c8193e"></div>
</div></div>
</body></html>
